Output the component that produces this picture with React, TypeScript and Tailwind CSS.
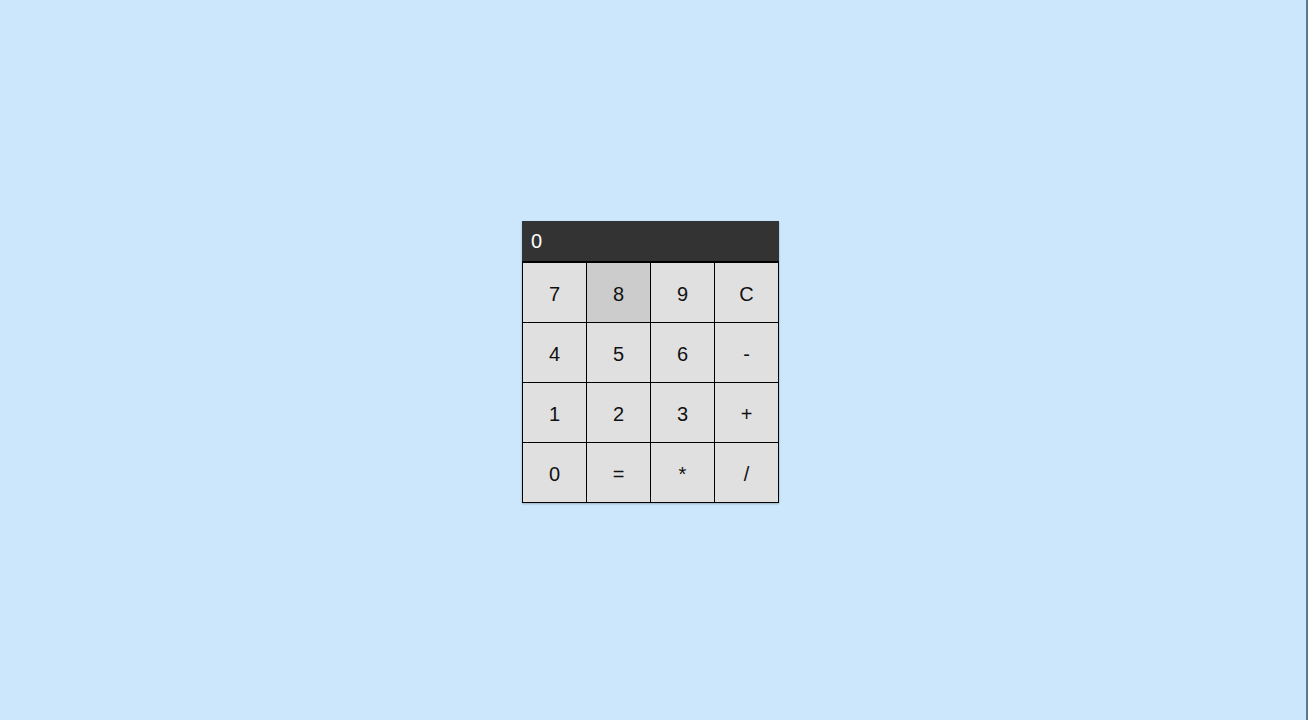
const keys = ["7", "8", "9", "C", "4", "5", "6", "-", "1", "2", "3", "+", "0", "=", "*", "/"];

export default function App() {
  return (
    <div className="min-h-screen h-[720px] bg-[#cce7fb] flex items-center justify-center pr-[7px] pt-[4px] relative" style={{ fontFamily: '"Liberation Sans", Arial, sans-serif' }}>
      <div className="w-[257px] shadow-[0_1px_2px_rgba(0,0,0,0.25)]">
        <div className="h-[42px] bg-[#333333] border-b-2 border-black flex items-center px-[9px] text-white text-[20px]">0</div>
        <div className="grid grid-cols-[repeat(4,63px)] auto-rows-[59px] gap-px p-px pt-0 bg-black">
          {keys.map((k) => (
            <button
              key={k}
              className={`${k === "8" ? "bg-[#cccccc]" : "bg-[#e0e0e0]"} text-[#111] text-[20px] pt-[2px] flex items-center justify-center`}
            >
              {k}
            </button>
          ))}
        </div>
      </div>
      <div className="absolute right-0 top-0 h-full w-[2px] bg-[#5a7a92]" />
    </div>
  );
}
